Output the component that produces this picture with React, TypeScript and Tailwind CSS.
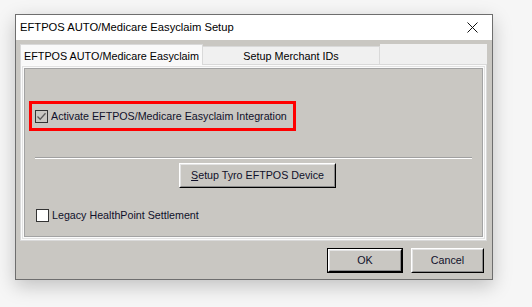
import { FC, ReactNode } from 'react';

const dlgFont = { fontFamily: '"Liberation Sans", Arial, sans-serif' };

const CheckBox: FC<{ checked?: boolean; label: string }> = ({ checked, label }) => (
  <div className="flex items-center gap-[3px] h-[13px] whitespace-nowrap">
    <div
      className={`w-[13px] h-[13px] shrink-0 border border-[#333] flex items-center justify-center ${
        checked ? 'bg-[#c9c7c2]' : 'bg-white'
      }`}>
      {checked && (
        <svg width="11" height="11" viewBox="0 0 11 11">
          <path d="M1.5 5.5 L4.2 8.2 L9.5 2.3" fill="none" stroke="#5a5a5a" strokeWidth="1.3" />
        </svg>
      )}
    </div>
    <span className="text-[10.7px] leading-[13px] text-[#10102a]">{label}</span>
  </div>
);

const ClassicButton: FC<{ children: ReactNode; width: string; isDefault?: boolean }> = ({
  children,
  width,
  isDefault,
}) => (
  <div className={`${width} h-[25px] ${isDefault ? 'border border-black' : ''}`}>
    <div className="w-full h-full border border-t-white border-l-white border-b-black border-r-black">
      <div className="w-full h-full border border-t-[#e3e3e3] border-l-[#e3e3e3] border-b-[#8a8a8a] border-r-[#8a8a8a] bg-[#c9c7c2] flex items-center justify-center text-[10.7px] text-[#10102a] whitespace-nowrap">
        {children}
      </div>
    </div>
  </div>
);

export default function App() {
  return (
    <div className="w-[532px] h-[307px] bg-[#f6f6f6] pt-[14px] pl-[15px]" style={dlgFont}>
      <div className="w-[478px] h-[266px] border border-[#6e6e6e] flex flex-col shadow-[0_6px_18px_rgba(0,0,0,0.22)]">
        {/* title bar */}
        <div className="h-[25px] bg-white flex items-center justify-between pl-[4px] pr-[14px]">
          <span className="text-[11.2px] text-black whitespace-nowrap">EFTPOS AUTO/Medicare Easyclaim Setup</span>
          <svg width="11" height="11" viewBox="0 0 11 11">
            <path d="M0.5 0.5 L10.5 10.5 M10.5 0.5 L0.5 10.5" stroke="#111" strokeWidth="1" />
          </svg>
        </div>

        {/* body */}
        <div className="flex-1 bg-[#c9c7c2] pt-[4px] pl-[4px] pr-[5px] flex flex-col">
          {/* tab strip */}
          <div className="flex h-[20px] items-end whitespace-nowrap">
            <div className="w-[183px] h-[21px] pt-[2px] bg-[#f9f9f9] border border-b-0 border-[#d9d9d9] flex items-center justify-center text-[10.8px] text-black relative z-10 -mb-[1px]">
              EFTPOS AUTO/Medicare Easyclaim
            </div>
            <div className="w-[177px] h-[18px] pt-[1px] bg-[#f0f0f0] border border-l-0 border-b-0 border-[#d9d9d9] flex items-center justify-center text-[10.8px] text-black">
              Setup Merchant IDs
            </div>
            <div className="flex-1 h-[20px] bg-[#f0f0f0]" />
          </div>

          {/* tab page */}
          <div className="h-[177px] bg-[#fbfbfb] border border-[#d9d9d9] p-[1px]">
            <div className="w-full h-full border border-[#e2e2e2] p-[1px]">
              <div className="w-full h-full bg-[#c9c7c2] border border-[#a3a3a3] pt-[32px] pl-[4px] flex flex-col">
                <div className="w-[267px] h-[30px] border-[3px] border-[#ff0000] flex items-center pl-[3px]">
                  <CheckBox checked label="Activate EFTPOS/Medicare Easyclaim Integration" />
                </div>

                <div className="mt-[26px] ml-[6px] w-[437px] border-t border-t-[#a0a0a0] border-b border-b-white" />

                <div className="mt-[4px] ml-[150px]">
                  <ClassicButton width="w-[157px]">
                    <span>
                      <span className="underline">S</span>etup Tyro EFTPOS Device
                    </span>
                  </ClassicButton>
                </div>

                <div className="mt-[21px] ml-[7px]">
                  <CheckBox label="Legacy HealthPoint Settlement" />
                </div>
              </div>
            </div>
          </div>

          {/* footer buttons */}
          <div className="flex justify-end gap-[8px] pt-[7px] pr-[3px]">
            <ClassicButton width="w-[76px]" isDefault>
              OK
            </ClassicButton>
            <ClassicButton width="w-[73px]">Cancel</ClassicButton>
          </div>
        </div>
      </div>
    </div>
  );
}
